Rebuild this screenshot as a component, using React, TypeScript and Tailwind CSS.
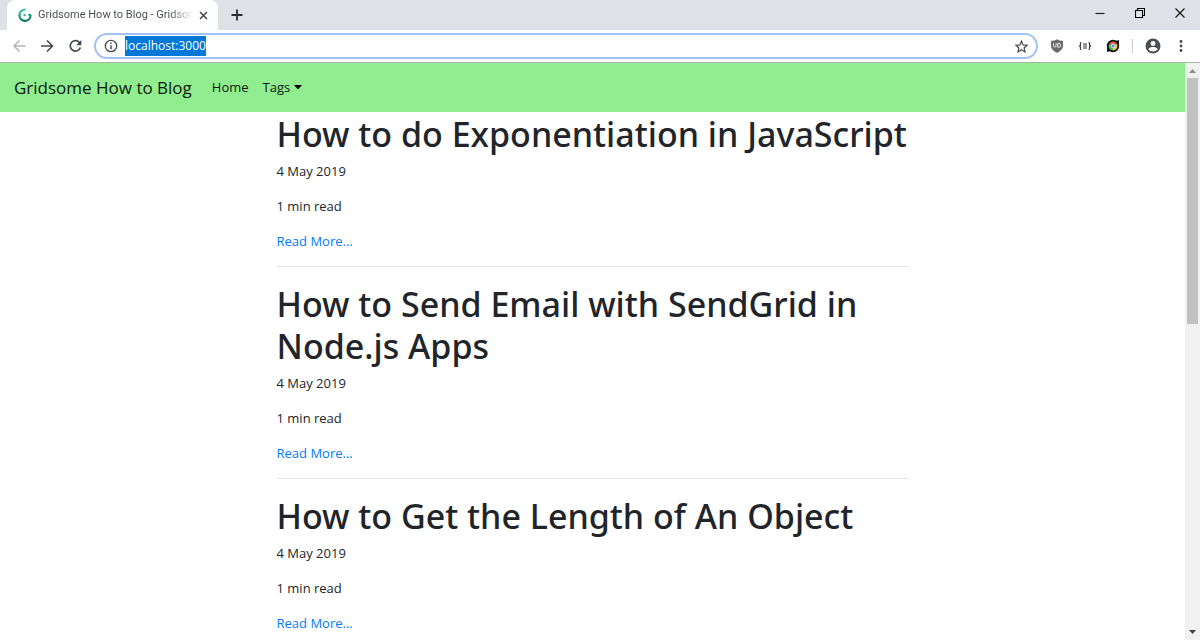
import { useEffect, useRef } from "react";

interface Post {
  id: number;
  title: string;
  date: string;
  readTime: string;
}

const posts: Post[] = [
  { id: 1, title: "How to do Exponentiation in JavaScript", date: "4 May 2019", readTime: "1 min read" },
  { id: 2, title: "How to Send Email with SendGrid in Node.js Apps", date: "4 May 2019", readTime: "1 min read" },
  { id: 3, title: "How to Get the Length of An Object", date: "4 May 2019", readTime: "1 min read" },
];

function GridsomeLogo() {
  return (
    <svg width="16" height="16" viewBox="0 0 16 16" fill="none" className="shrink-0">
      <defs>
        <linearGradient id="ring" x1="0" y1="0" x2="0" y2="1">
          <stop offset="0" stopColor="#3fc79e" />
          <stop offset="1" stopColor="#0b7a5a" />
        </linearGradient>
      </defs>
      <path d="M7.6 2.6A5.6 5.6 0 1 0 13.6 8.6" stroke="url(#ring)" strokeWidth="2.2" strokeLinecap="round" />
      <circle cx="7.6" cy="8" r="1.2" fill="#2fbb92" />
      <circle cx="12.6" cy="8" r="1.3" fill="#149a72" />
    </svg>
  );
}

function TabStrip() {
  return (
    <div className="flex h-[30px] shrink-0 items-end bg-[#dee1e6] pl-[7px]">
      <div className="flex h-[30px] w-[211px] items-center rounded-t-lg bg-white pr-[10px] pl-[10px]">
        <GridsomeLogo />
        <span className="ml-[5px] w-[155px] overflow-hidden bg-linear-to-r from-[#45494d] from-85% to-white bg-clip-text font-[Roboto,sans-serif] text-[11px] whitespace-nowrap text-transparent">
          Gridsome How to Blog - Gridsome
        </span>
        <button aria-label="Close tab" className="ml-auto flex h-4 w-[9px] items-center justify-center">
          <svg width="9" height="9" viewBox="0 0 9 9" stroke="#3c4043" strokeWidth="1.4">
            <path d="M1 1l7 7M8 1L1 8" />
          </svg>
        </button>
      </div>
      <button aria-label="New tab" className="ml-[11px] flex h-[30px] w-4 items-center justify-center">
        <svg width="12" height="12" viewBox="0 0 12 12" stroke="#2b2e31" strokeWidth="1.8">
          <path d="M6 .5v11M.5 6h11" />
        </svg>
      </button>
      <div className="ml-auto flex h-[30px] items-center pb-1">
        <button aria-label="Minimize" className="flex w-10 justify-center">
          <svg width="10" height="10" viewBox="0 0 10 10" stroke="#222" strokeWidth="1.2">
            <path d="M.5 5.5h9" />
          </svg>
        </button>
        <button aria-label="Restore" className="flex w-10 justify-center">
          <svg width="10" height="10" viewBox="0 0 10 10" fill="none" stroke="#000" strokeWidth="1.1">
            <path d="M.5 2.5h7v7h-7zM2.5 2.5v-2h7v7h-2" />
          </svg>
        </button>
        <button aria-label="Close" className="flex w-10 justify-center">
          <svg width="10" height="10" viewBox="0 0 10 10" stroke="#111" strokeWidth="1.1">
            <path d="M.5 .5l9 9M9.5 .5l-9 9" />
          </svg>
        </button>
      </div>
    </div>
  );
}

function Toolbar() {
  const addressRef = useRef<HTMLInputElement>(null);

  useEffect(() => {
    addressRef.current?.focus();
    addressRef.current?.select();
  }, []);

  return (
    <div className="flex h-8 shrink-0 items-center bg-white pl-3">
      <div className="flex gap-[14px]">
        <button aria-label="Back">
          <svg width="14" height="14" viewBox="0 0 14 14" fill="none" stroke="#b4b6b9" strokeWidth="1.6">
            <path d="M13.5 7H2M7.5 1.5L2 7l5.5 5.5" />
          </svg>
        </button>
        <button aria-label="Forward">
          <svg width="14" height="14" viewBox="0 0 14 14" fill="none" stroke="#45494d" strokeWidth="1.6">
            <path d="M1 7h11.5M7 1.5L12.5 7 7 12.5" />
          </svg>
        </button>
        <button aria-label="Reload">
          <svg width="14" height="14" viewBox="0 0 14 14" fill="none" stroke="#45494d" strokeWidth="1.7">
            <path d="M11.8 4A5.2 5.2 0 1 0 12.4 8.4" />
            <path d="M13.3 1v5.2H8.2z" fill="#45494d" stroke="none" />
          </svg>
        </button>
      </div>
      <div className="ml-3 flex h-[26px] flex-1 items-center rounded-full border-2 border-[#a3c2f8] pr-2 pl-2">
        <svg width="14" height="14" viewBox="0 0 14 14" fill="none" stroke="#45494d" strokeWidth="1.3" className="shrink-0">
          <circle cx="7" cy="7" r="5.7" />
          <path d="M7 6.2v4M7 3.6V5" strokeWidth="1.4" />
        </svg>
        <input
          ref={addressRef}
          aria-label="Address"
          defaultValue="localhost:3000"
          className="ml-[7px] min-w-0 flex-1 text-xs leading-5 text-[#202124] outline-none selection:bg-[#0078d7] selection:text-white"
        />
        <button aria-label="Bookmark this page">
          <svg width="13" height="13" viewBox="0 0 13 13" fill="none" stroke="#45494d" strokeWidth="1.2">
            <path d="M6.5 1.2l1.6 3.7 4 .4-3 2.7.9 3.9-3.5-2.1L3 11.900l.9-3.900-3-2.700 4-.4z" />
          </svg>
        </button>
      </div>
      <div className="flex items-center pl-3">
        <button aria-label="Ad blocker">
          <svg width="14" height="14" viewBox="0 0 14 14">
            <path d="M7 .2C5.5 1.3 3.3 1.8 1 1.8v4.7c0 3.5 2.5 5.7 6 7.300 3.500-1.600 6-3.800 6-7.300V1.800C10.700 1.800 8.500 1.300 7 .2z" fill="#6b6b6b" />
            <path d="M3.5 4.300v2.400a1.300 1.300 0 0 0 2.600 0V4.300M7.800 4.300v4h.8a2 2 0 0 0 0-4z" fill="none" stroke="#eee" />
          </svg>
        </button>
        <button aria-label="JSON viewer" className="ml-[14px]">
          <svg width="14" height="14" viewBox="0 0 14 14" fill="none" stroke="#333" strokeWidth="1.2">
            <path d="M3.5 3.5c-1.600 0-1 1.500-1 2.500S1.800 7 1 7c.8 0 1.500 0 1.500 1s-.6 2.500 1 2.500M10.500 3.500c1.600 0 1 1.500 1 2.500s.7 1 1.500 1c-.8 0-1.500 0-1.500 1s.6 2.500-1 2.500" />
            <path d="M5 5h4M5 7h4M5 9h4" strokeWidth="1" />
          </svg>
        </button>
        <button aria-label="Page refresher" className="ml-[14px]">
          <svg width="14" height="14" viewBox="0 0 14 14">
            <circle cx="7" cy="7" r="6.2" fill="#111" />
            <path d="M9.5 2l3.500-1v4.500zM4.500 12L1 13V8.500z" fill="#111" />
            <path d="M7 7L3.200 4.800A4.400 4.400 0 0 1 10.800 4.800z" fill="#e8604c" />
            <path d="M7 7L3.200 4.800A4.400 4.400 0 0 0 7 11.400z" fill="#45b85a" />
            <path d="M7 7l3.800-2.200A4.400 4.400 0 0 1 7 11.400z" fill="#fbc926" />
            <circle cx="7" cy="7" r="1.900" fill="#4f93f5" stroke="#eee" strokeWidth=".8" />
          </svg>
        </button>
        <div className="ml-3 h-[14px] w-px bg-[#c8cacd]" />
        <button aria-label="Profile" className="ml-3">
          <svg width="16" height="16" viewBox="0 0 16 16">
            <circle cx="8" cy="8" r="7.5" fill="#4b4f54" />
            <circle cx="8" cy="5.5" r="2.4" fill="#fff" />
            <path d="M3.3 11.2C4 9.6 6.3 9 8 9s4 .6 4.7 2.200A5.700 5.700 0 0 1 8 13.600a5.700 5.700 0 0 1-4.700-2.400z" fill="#fff" />
          </svg>
        </button>
        <button aria-label="Menu" className="mr-3 ml-[13px]">
          <svg width="14" height="14" viewBox="0 0 14 14" fill="#45494d">
            <circle cx="7" cy="2.5" r="1.4" />
            <circle cx="7" cy="7" r="1.4" />
            <circle cx="7" cy="11.5" r="1.4" />
          </svg>
        </button>
      </div>
    </div>
  );
}

function Navbar() {
  return (
    <nav className="flex h-[49px] items-center bg-[#90ee90] px-[14px] text-[#0d180d]">
      <a href="#" className="text-[17px]">Gridsome How to Blog</a>
      <a href="#" className="ml-5 text-[13px]">Home</a>
      <button className="ml-[14px] flex items-center gap-1 text-[13px]">
        Tags
        <svg width="8" height="5" viewBox="0 0 8 5">
          <path d="M0 0h8L4 4.5z" />
        </svg>
      </button>
    </nav>
  );
}

function PostSummary({ post }: { post: Post }) {
  return (
    <article className="mb-4 border-b border-[#e3e4e5] pb-[14px] text-[13px] leading-[21px]">
      <h1 className="mb-[6px] font-['Noto_Sans',sans-serif] text-[34px] leading-[42px] font-medium">{post.title}</h1>
      <p className="mb-[14px]">{post.date}</p>
      <p className="mb-[14px]">{post.readTime}</p>
      <a href="#" className="block text-[#007bff]">Read More...</a>
    </article>
  );
}

function Scrollbar() {
  return (
    <div className="flex w-[15px] shrink-0 flex-col items-center bg-[#f1f1f1]">
      <svg width="15" height="15" viewBox="0 0 15 15" fill="#8a8a8a" className="shrink-0">
        <path d="M4 10h7L7.5 6z" />
      </svg>
      <div className="w-full flex-1 px-[2px]">
        <div className="h-[45%] bg-[#c1c1c1]" />
      </div>
      <svg width="15" height="15" viewBox="0 0 15 15" fill="#404040" className="shrink-0">
        <path d="M4 5h7L7.5 9z" />
      </svg>
    </div>
  );
}

export default function App() {
  return (
    <div className="flex h-screen flex-col overflow-hidden bg-white font-['Segoe_UI','Open_Sans','Noto_Sans',sans-serif] text-[#212529]">
      <TabStrip />
      <Toolbar />
      <div className="flex min-h-0 flex-1 border-t border-[#a9b3ab]">
        <div className="min-w-0 flex-1 overflow-hidden">
          <Navbar />
          <main className="mx-auto max-w-[632px] pt-px">
            {posts.map((post) => (
              <PostSummary key={post.id} post={post} />
            ))}
          </main>
        </div>
        <Scrollbar />
      </div>
    </div>
  );
}
